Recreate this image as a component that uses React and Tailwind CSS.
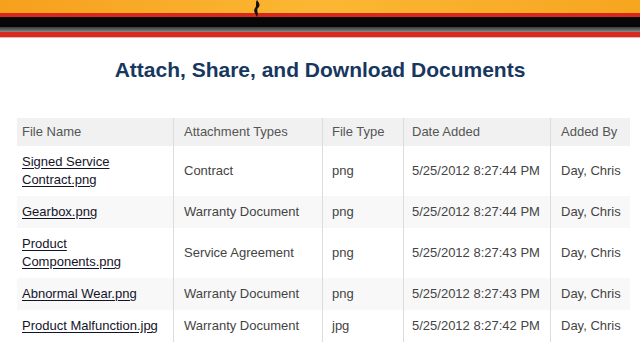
// Documents page: banner strip, title and attachments table

const rows = [
  { name: ["Signed Service", "Contract.png"], type: "Contract", ext: "png", date: "5/25/2012 8:27:44 PM", by: "Day, Chris" },
  { name: ["Gearbox.png"], type: "Warranty Document", ext: "png", date: "5/25/2012 8:27:44 PM", by: "Day, Chris" },
  { name: ["Product", "Components.png"], type: "Service Agreement", ext: "png", date: "5/25/2012 8:27:43 PM", by: "Day, Chris" },
  { name: ["Abnormal Wear.png"], type: "Warranty Document", ext: "png", date: "5/25/2012 8:27:43 PM", by: "Day, Chris" },
  { name: ["Product Malfunction.jpg"], type: "Warranty Document", ext: "jpg", date: "5/25/2012 8:27:42 PM", by: "Day, Chris" },
];

const cols = "grid grid-cols-[156px_149px_81px_147px_80px]";

const Banner = () => (
  <div className="relative flex flex-col">
    <div className="h-[13px] bg-gradient-to-r from-[#f6a01c] via-[#fbb733] to-[#f7a51f]" />
    <div className="h-[4px] bg-[#d8281d]" />
    <div className="h-[10px] bg-[#070708]" />
    <div className="h-[5px] bg-gradient-to-b from-[#3a3a3a] to-[#8a8a8a]" />
    <div className="h-[5px] bg-[#d92a22]" />
    <div className="h-[1px] bg-[#e7b7b7]" />
    {/* small dark drip under the logo */}
    <svg className="absolute left-[250px] top-0" width="14" height="18" viewBox="0 0 14 18">
      <path d="M7 0 C9 3 11 5 8 8 C6 10 9 12 7 17 C5 13 3 11 5 8 C7 6 5 3 7 0Z" fill="#111" />
    </svg>
  </div>
);

export default function App() {
  return (
    <div className="w-[640px] h-[360px] overflow-hidden bg-white font-['Liberation_Sans',Arial,sans-serif]">
      <Banner />

      <h1 className="mt-[20px] text-center text-[21px] leading-[24px] font-bold text-[#17375e]">
        Attach, Share, and Download Documents
      </h1>

      <div className="ml-[17px] mt-[36px] w-[613px] text-[13px] leading-[18px]">
        {/* header row */}
        <div className={`${cols} h-[28px] bg-[#f1f1f1] text-[#555]`}>
          <div className="flex items-center pl-[5px]">File Name</div>
          <div className="flex items-center pl-[10px] border-l border-[#dcdcdc]">Attachment Types</div>
          <div className="flex items-center pl-[9px] border-l border-[#dcdcdc]">File Type</div>
          <div className="flex items-center pl-[8px] border-l border-[#dcdcdc]">Date Added</div>
          <div className="flex items-center pl-[10px] border-l border-[#dcdcdc]">Added By</div>
        </div>

        {rows.map((r, i) => (
          <div
            key={i}
            className={`${cols} ${r.name.length > 1 ? "h-[50px]" : "h-[32px]"} ${i % 2 === 1 ? "bg-[#f8f8f8]" : "bg-white"} text-[#444]`}
          >
            <div className="flex flex-col justify-center pl-[5px]">
              {r.name.map((n) => (
                <span key={n} className="text-[#141428] underline underline-offset-[2px] leading-[18px]">{n}</span>
              ))}
            </div>
            <div className="flex items-center pl-[10px] border-l border-[#dcdcdc]">{r.type}</div>
            <div className="flex items-center pl-[9px] border-l border-[#dcdcdc]">{r.ext}</div>
            <div className="flex items-center pl-[8px] border-l border-[#dcdcdc]">{r.date}</div>
            <div className="flex items-center pl-[10px] border-l border-[#dcdcdc]">{r.by}</div>
          </div>
        ))}
      </div>
    </div>
  );
}
